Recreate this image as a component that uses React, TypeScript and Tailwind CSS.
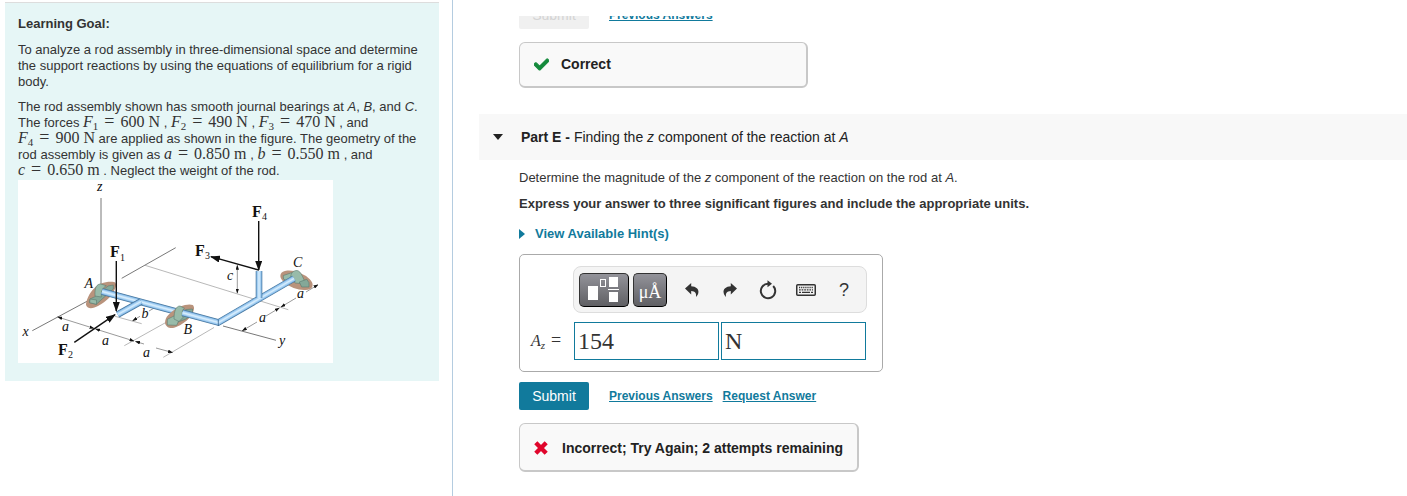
import type { ReactNode } from "react"
import { FaCheck } from "react-icons/fa"

const MathText = ({ children }: { children: ReactNode }) => (
  <span className="whitespace-nowrap font-['Liberation_Serif',serif] text-base leading-[0]">
    {children}
  </span>
)

const Sub = ({ children }: { children: ReactNode }) => (
  <sub className="text-[11px] not-italic leading-[0]">{children}</sub>
)

const Eq = () => <span className="mx-[2px] text-lg leading-[0]">=</span>

const Arrowhead = ({ id, size }: { id: string; size: number }) => (
  <marker
    id={id}
    viewBox="0 0 10 7"
    refX="9"
    refY="3.5"
    markerWidth={size}
    markerHeight={size * 0.7}
    markerUnits="userSpaceOnUse"
    orient="auto-start-reverse"
  >
    <path d="M0 0L10 3.5L0 7Z" fill="#111" />
  </marker>
)

const Rod = ({ d }: { d: string }) => (
  <g fill="none" strokeLinejoin="miter">
    <path d={d} stroke="#47779f" strokeWidth="6.6" />
    <path d={d} stroke="#86b9e6" strokeWidth="5.2" />
    <path d={d} stroke="#aed6f6" strokeWidth="3.6" />
    <path d={d} stroke="#d6ecfc" strokeWidth="1.4" />
  </g>
)

const RodFigure = () => (
  <svg
    viewBox="0 0 315 183"
    className="block w-[315px] max-w-full bg-white"
    role="img"
    aria-label="Rod assembly"
  >
    <defs>
      <Arrowhead id="force" size={10} />
      <Arrowhead id="dim" size={5} />
    </defs>

    {/* axes and extension lines */}
    <g stroke="#555" strokeWidth="0.8" fill="none">
      <path d="M83 18V108" />
      <path d="M14.3 150.7L74 118.6M103.7 98.3L157.7 67.7" />
      <path d="M205 146L258 160.3" />
    </g>
    <g stroke="#888" strokeWidth="0.6" fill="none">
      <path d="M127 85.3L270.3 129.7" />
      <path d="M106.3 165.7L148.7 142M145.3 177.3L196 147.5" />
      <path d="M97 136.3L123.7 143.7" />
    </g>

    {/* dimensions */}
    <g stroke="#555" strokeWidth="0.6" fill="none">
      <path d="M39.7 137L76 148.4" markerStart="url(#dim)" markerEnd="url(#dim)" />
      <path d="M77.5 149L116 161" markerStart="url(#dim)" markerEnd="url(#dim)" />
      <path d="M117.5 161.5L126 164" markerStart="url(#dim)" />
      <path d="M138 168L154.5 172.5" markerEnd="url(#dim)" />
      <path d="M114.7 140.7L122 136.3" markerStart="url(#dim)" />
      <path d="M131 131L139.7 126" markerEnd="url(#dim)" />
      <path d="M219.3 85.3V113" markerStart="url(#dim)" markerEnd="url(#dim)" />
      <path d="M224.3 150.7L239 142" markerStart="url(#dim)" />
      <path d="M248 136L261.3 128" markerEnd="url(#dim)" />
      <path d="M263 127L278 118" markerStart="url(#dim)" />
      <path d="M288 112L300 104.7" markerEnd="url(#dim)" />
    </g>

    {/* bearing A */}
    <path
      d="M68 125C68 121 71 113 76.5 108C80 104 88 101 96 102C100 103 98 109 92 117C88 121 84 124 80 126C76 128 70 130 68 125Z"
      fill="#b9937c"
    />
    <g stroke="#5c7a6f" strokeWidth="0.6">
      <path d="M72 119L76.7 116.7L90 106L95.3 105V109L78.3 124.3L71.7 122.7Z" fill="#84a898" />
      <path d="M72 119L78.5 120V124.3L71.7 122.7Z" fill="#98bba9" />
      <path d="M77 116C76.5 107 79 104 82.7 104L88.3 105.7C84 108 83 112 83.3 117Z" fill="#98bba9" />
    </g>

    <Rod d="M84 111.5L160 132" />

    {/* bearing B */}
    <path
      d="M147 143.3C147 140 148 137 150.3 135C154 131 158 128 162 126.7C167 124.5 172 124 174.7 125C177 127 176.5 131 172 137.3C168 142 163 145 158.7 146.7C155 148.5 149 149.5 147 143.3Z"
      fill="#b9937c"
    />
    <g stroke="#5c7a6f" strokeWidth="0.6">
      <path d="M164 132L168 129.5L174.5 129V134L168 139L160 142Z" fill="#84a898" />
      <path d="M149.3 139.3L156 136L161 140L158.7 145.3L149.3 145Z" fill="#98bba9" />
      <path d="M156 139C156 131 158 126 162 126L166.5 128.3C163.5 130 164 135 165 137.5L161 141.5Z" fill="#98bba9" />
    </g>

    {/* bearing C */}
    <ellipse cx="278.5" cy="100.3" rx="17" ry="8.2" fill="#b9937c" transform="rotate(21 278.5 100.3)" />
    <g stroke="#5c7a6f" strokeWidth="0.6">
      <path d="M265.3 95.5L273.7 92.7L276 98L268.7 100.7L265.5 99Z" fill="#98bba9" />
      <path d="M272.7 97C273 93 275 90.5 279 90.5C283 91 284.5 97 288 104L277 103Z" fill="#98bba9" />
      <path d="M281.3 102L288.7 99.3L291 102.7V107L283.7 107Z" fill="#84a898" />
    </g>

    <Rod d="M164.5 132.8L200.3 142.5L276 98.5" />
    <path d="M200.3 139.5V146" stroke="#2d5c86" strokeWidth="0.8" />
    <Rod d="M241 118V91" />
    <Rod d="M123 121.5L99.7 134.5" />

    {/* forces */}
    <g stroke="#111" strokeWidth="1.4" fill="none">
      <path d="M98.3 81V131" markerEnd="url(#force)" />
      <path d="M56.3 162.3L97 134.7" markerEnd="url(#force)" />
      <path d="M240.7 41V90" markerEnd="url(#force)" />
      <path d="M240.7 90L193 76.7" markerEnd="url(#force)" />
    </g>

    <g fontFamily="Liberation Serif, serif" fontSize="14" fontStyle="italic" fill="#111">
      <text x="79" y="11">z</text>
      <text x="66.5" y="108">A</text>
      <text x="4.5" y="156">x</text>
      <text x="44" y="151">a</text>
      <text x="84" y="165">a</text>
      <text x="125" y="177">a</text>
      <text x="123.5" y="138">b</text>
      <text x="165.5" y="154">B</text>
      <text x="209" y="100">c</text>
      <text x="275" y="87">C</text>
      <text x="279" y="118">a</text>
      <text x="241" y="142">a</text>
      <text x="261" y="165">y</text>
    </g>
    <g fontFamily="Liberation Serif, serif" fontSize="16" fill="#111">
      <text x="92" y="77" fontWeight="bold">F</text>
      <text x="102" y="81" fontSize="10">1</text>
      <text x="40" y="175" fontWeight="bold">F</text>
      <text x="50" y="178" fontSize="10">2</text>
      <text x="177" y="76" fontWeight="bold">F</text>
      <text x="187" y="79" fontSize="10">3</text>
      <text x="234" y="37" fontWeight="bold">F</text>
      <text x="244" y="40" fontSize="10">4</text>
    </g>
  </svg>
)

const UndoIcon = ({ className = "" }: { className?: string }) => (
  <svg viewBox="0 0 14 14" className={`size-[14px] ${className}`} fill="#333">
    <path d="M0 5.6L6.2 0V3.2C11 3.4 14 6 13.4 9.6C13.1 11.6 12.2 13 11 14C11.5 10.4 10.4 8.3 6.2 8.1V11.4Z" />
  </svg>
)

const ResetIcon = () => (
  <svg viewBox="0 0 18 20" className="h-5 w-[18px]" fill="none" stroke="#333" strokeWidth="2">
    <path d="M14.2 6A7.2 7.2 0 1 1 9 3.8" />
    <path d="M8.5 0.3L13 3.8L8.5 7.3Z" fill="#333" stroke="none" />
  </svg>
)

const KeyboardIcon = () => (
  <svg viewBox="0 0 20 12" className="h-3 w-5" fill="none" stroke="#333">
    <rect x="0.75" y="0.75" width="18.5" height="10.5" rx="1" strokeWidth="1.5" />
    <path d="M3 3.5H17" strokeDasharray="1.2 0.9" strokeWidth="1.3" />
    <path d="M3 5.8H17" strokeDasharray="1.7 0.9" strokeWidth="1.3" />
    <path d="M3 8.3H5M6 8.3H14M15 8.3H17" strokeWidth="1.3" />
  </svg>
)

const TemplateIcon = () => (
  <svg viewBox="0 0 32 26" className="h-[26px] w-8 shrink-0" fill="#fff">
    <rect x="0" y="9" width="10" height="14" />
    <rect x="12.5" y="2.5" width="5" height="7" fill="none" stroke="#fff" />
    <rect x="21" y="0" width="9" height="10" />
    <rect x="20" y="12" width="11" height="1" />
    <rect x="21" y="15" width="9" height="10" />
  </svg>
)

const toolButton =
  "flex h-[34px] items-center justify-center rounded-[5px] border border-[#333] border-r-black border-b-black bg-linear-to-b from-[#93939a] to-[#606064] text-white"

const iconButton = "flex h-[34px] w-[38px] items-center justify-center"

const linkStyle = "text-xs font-bold text-[#117a9c] underline"

const Toolbar = () => (
  <div className="flex h-[47px] items-center rounded-lg border border-[#ddd] bg-[#f4f4f4] pl-[5px]">
    <button aria-label="Templates" className={`${toolButton} w-[50px]`}>
      <TemplateIcon />
    </button>
    <button className={`${toolButton} ml-1 w-[34px] pt-1 font-['Liberation_Serif',serif] text-lg leading-none`}>
      μÅ
    </button>
    <div className="ml-[6px] flex">
      <button aria-label="Undo" className={iconButton}>
        <UndoIcon />
      </button>
      <button aria-label="Redo" className={iconButton}>
        <UndoIcon className="-scale-x-100" />
      </button>
      <button aria-label="Reset" className={iconButton}>
        <ResetIcon />
      </button>
      <button aria-label="Keyboard" className={iconButton}>
        <KeyboardIcon />
      </button>
      <button className={`${iconButton} text-lg text-[#333]`}>?</button>
    </div>
  </div>
)

const LearningGoal = () => (
  <section className="border-t border-[#ddd] bg-[#e6f6f6] px-[13px] pt-[13px] pb-[18px] text-[13px] leading-4">
    <h2 className="font-bold">Learning Goal:</h2>
    <p className="mt-[10px]">
      To analyze a rod assembly in three-dimensional space and determine
      <br />
      the support reactions by using the equations of equilibrium for a rigid
      <br />
      body.
    </p>
    <p className="mt-[9px] mb-px">
      The rod assembly shown has smooth journal bearings at <i>A</i>, <i>B</i>, and <i>C</i>.
      <br />
      The forces <MathText><i>F</i><Sub>1</Sub> <Eq /> 600 N</MathText> ,{" "}
      <MathText><i>F</i><Sub>2</Sub> <Eq /> 490 N</MathText> ,{" "}
      <MathText><i>F</i><Sub>3</Sub> <Eq /> 470 N</MathText> , and
      <br />
      <MathText><i>F</i><Sub>4</Sub> <Eq /> 900 N</MathText> are applied as shown in the figure. The
      geometry of the
      <br />
      rod assembly is given as <MathText><i>a</i> <Eq /> 0.850 m</MathText> ,{" "}
      <MathText><i>b</i> <Eq /> 0.550 m</MathText> , and
      <br />
      <MathText><i>c</i> <Eq /> 0.650 m</MathText> . Neglect the weight of the rod.
    </p>
    <RodFigure />
  </section>
)

const App = () => {
  return (
    <div className="flex min-h-screen bg-white font-['Liberation_Sans',Arial,sans-serif] text-[#333]">
      <aside className="w-[453px] shrink-0 border-r border-[#b4cce0] pt-[2px] pr-[13px] pl-[5px]">
        <LearningGoal />
      </aside>

      <main className="min-w-0 grow pt-4 pl-[26px]">
        <div className="flex h-[13px] items-end overflow-hidden pl-10">
          <button
            disabled
            className="h-7 w-[70px] shrink-0 rounded-[2px] bg-[#f0f0f0] text-sm text-[#d4d4d4]"
          >
            Submit
          </button>
          <a href="#previous-d" className={`${linkStyle} ml-5 leading-7`}>
            Previous Answers
          </a>
        </div>

        <div className="mt-[13px] ml-10 flex h-[46px] w-[289px] items-center gap-3 rounded-md border border-r-2 border-b-2 border-[#c8c8c8] bg-[#f9f9f9] pb-px pl-[14px] text-sm font-bold text-[#222]">
          <FaCheck className="size-[15px] text-[#148a3c]" stroke="currentColor" strokeWidth="36" />
          Correct
        </div>

        <h2 className="mt-[26px] flex h-[46px] items-center bg-[#f8f8f8] pl-[14px] text-sm text-[#222]">
          <svg viewBox="0 0 10 6" className="mr-[18px] h-[6px] w-[10px]" fill="#222">
            <path d="M0 0H10L5 6Z" />
          </svg>
          <span>
            <b>Part E -</b> Finding the <i>z</i> component of the reaction at <i>A</i>
          </span>
        </h2>

        <div className="pt-[10px] pl-10 text-[13px] leading-4">
          <p>
            Determine the magnitude of the <i>z</i> component of the reaction on the rod at <i>A</i>.
          </p>
          <p className="mt-[10px] font-bold">
            Express your answer to three significant figures and include the appropriate units.
          </p>
          <button className="mt-[14px] flex items-center gap-[10px] font-bold text-[#117a9c]">
            <svg viewBox="0 0 6 10" className="h-[10px] w-[6px]" fill="currentColor">
              <path d="M0 0L6 5L0 10Z" />
            </svg>
            View Available Hint(s)
          </button>

          <div className="mt-3 grid w-fit grid-cols-[42px_294px] gap-y-[9px] rounded-[5px] border border-[#aaa] py-[11px] pr-[15px] pl-[11px]">
            <div className="col-start-2">
              <Toolbar />
            </div>
            <label
              htmlFor="value"
              className="self-center font-['Liberation_Serif',serif] text-base whitespace-nowrap"
            >
              <i>
                A<sub className="text-[11px]">z</sub>
              </i>{" "}
              <Eq />
            </label>
            <div className="grid grid-cols-2 gap-[2px] px-px font-['Liberation_Serif',serif] text-2xl">
              <input
                id="value"
                defaultValue="154"
                className="h-[38px] w-full min-w-0 border border-[#117a9c] px-[3px]"
              />
              <input
                aria-label="Units"
                defaultValue="N"
                className="h-[38px] w-full min-w-0 border border-[#117a9c] px-[3px]"
              />
            </div>
          </div>

          <div className="mt-[10px] flex items-center">
            <button className="h-7 w-[70px] rounded-[2px] bg-[#117a9c] text-sm text-white">
              Submit
            </button>
            <a href="#previous" className={`${linkStyle} ml-5`}>
              Previous Answers
            </a>
            <a href="#request" className={`${linkStyle} ml-[10px]`}>
              Request Answer
            </a>
          </div>

          <div className="mt-[13px] flex h-[49px] w-[340px] items-center gap-[14px] rounded-md border border-r-2 border-b-2 border-[#c8c8c8] bg-[#f9f9f9] pt-px pl-[14px] text-sm font-bold text-[#222]">
            <svg viewBox="0 0 14 14" className="size-[14px]" stroke="#e0062c" strokeWidth="4.4">
              <path d="M1.8 1.8L12.2 12.2M12.2 1.8L1.8 12.2" />
            </svg>
            Incorrect; Try Again; 2 attempts remaining
          </div>
        </div>
      </main>
    </div>
  )
}

export default App
